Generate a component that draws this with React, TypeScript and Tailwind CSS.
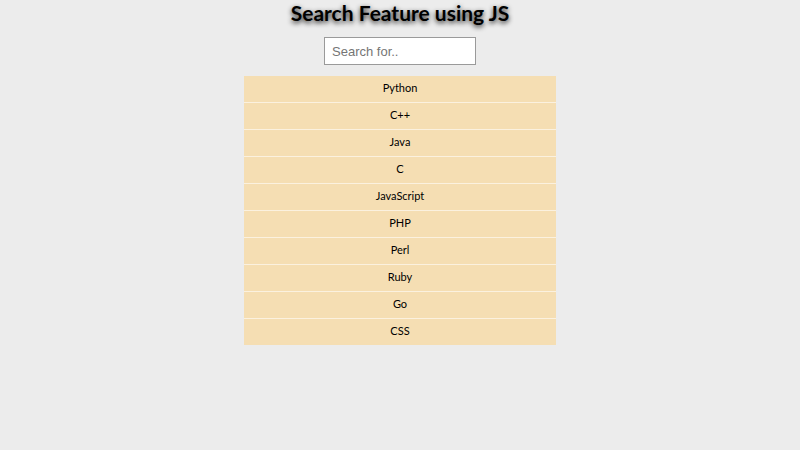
const langs = ["Python", "C++", "Java", "C", "JavaScript", "PHP", "Perl", "Ruby", "Go", "CSS"];

export default function App() {
  return (
    <div className="min-h-[450px] w-full bg-[#ececec] flex flex-col items-center font-['Lato','Open_Sans',sans-serif]">
      <h1 className="mt-0 text-[21px] leading-[26px] font-bold text-black [text-shadow:0_2px_5px_rgba(0,0,0,0.9)]">
        Search Feature using JS
      </h1>
      <input
        type="text"
        placeholder="Search for.."
        className="mt-[11px] w-[152px] h-[28px] bg-white border border-[#9a9a9a] px-[7px] text-[13px] font-['Liberation_Sans',Arial,sans-serif] placeholder:text-[#757575] outline-none"
      />
      <ul className="mt-[11px] w-[312px] flex flex-col gap-px bg-[#fbf1df]">
        {langs.map((l) => (
          <li key={l} className="h-[26px] pb-[2px] bg-[#f5deb3] flex items-center justify-center text-[11px] text-black">
            {l}
          </li>
        ))}
      </ul>
    </div>
  );
}
